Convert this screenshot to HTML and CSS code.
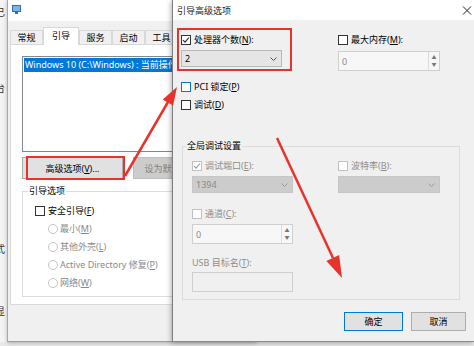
FILE: index.html
```html
<!DOCTYPE html>
<html lang="zh-CN">
<head>
  <meta charset="UTF-8" />
  <title>引导高级选项</title>
  <link rel="stylesheet" href="styles.css">
</head>
<body>
  <div class="desktop">

    <div class="bg-window">
      <span class="bg-text t1">已</span>
      <span class="bg-text t2">台</span>
      <span class="bg-text t3">式</span>
      <span class="bg-text t4">显</span>
    </div>

    <!-- 系统配置 -->
    <div class="win-main">
      <div class="titlebar main-title">
        <svg class="app-icon" width="9" height="9" viewBox="0 0 9 9">
          <rect x="0.5" y="0.5" width="8" height="6" fill="#7fb2e5" stroke="#2f6fb7" />
          <rect x="3" y="7" width="3" height="2" fill="#2f6fb7" />
        </svg>
      </div>

      <div class="tabs">
        <span class="tab">常规</span>
        <span class="tab active">引导</span>
        <span class="tab">服务</span>
        <span class="tab">启动</span>
        <span class="tab">工具</span>
      </div>

      <div class="panel">
        <div class="listbox">
          <div class="list-item">Windows 10 (C:\Windows) : 当前操作系统; 默认 OS</div>
        </div>

        <div class="btn-row">
          <button class="btn btn-adv">高级选项(<u>V</u>)...</button>
          <button class="btn" disabled>设为默认值(<u>D</u>)</button>
        </div>

        <div class="group boot-group">
          <span class="group-title">引导选项</span>
          <label class="check"><span class="box"></span>安全引导(<u>F</u>)</label>
          <div class="radios">
            <label class="radio"><span class="dot"></span>最小(<u>M</u>)</label>
            <label class="radio"><span class="dot"></span>其他外壳(<u>L</u>)</label>
            <label class="radio"><span class="dot"></span>Active Directory 修复(<u>P</u>)</label>
            <label class="radio"><span class="dot"></span>网络(<u>W</u>)</label>
          </div>
        </div>
      </div>
    </div>

    <!-- 引导高级选项 -->
    <div class="dialog">
      <div class="titlebar dlg-title">
        <span>引导高级选项</span>
        <svg class="close" width="14" height="9" viewBox="0 0 14 9">
          <path d="M3 0.5 L11 8.5 M11 0.5 L3 8.5" stroke="#222" stroke-width="1" fill="none" />
        </svg>
      </div>

      <div class="dlg-body">
        <div class="top-grid">
          <label class="check"><span class="box checked">
            <svg width="8" height="8" viewBox="0 0 8 8"><path d="M1 4 L3 6.2 L7 1.5" stroke="#222" stroke-width="1.1" fill="none" /></svg>
          </span>处理器个数(<u>N</u>):</label>
          <label class="check"><span class="box"></span>最大内存(<u>M</u>):</label>

          <div class="combo">
            <span>2</span>
            <svg width="7" height="4" viewBox="0 0 7 4"><path d="M0.5 0.5 L3.5 3.5 L6.5 0.5" stroke="#555" fill="none" /></svg>
          </div>
          <div class="spin spin-mem">
            <span>0</span>
            <span class="spin-btns"><i>▲</i><i>▼</i></span>
          </div>
        </div>

        <label class="check row-pci"><span class="box hover"></span>PCI 锁定(<u>P</u>)</label>
        <label class="check row-debug"><span class="box"></span>调试(<u>D</u>)</label>

        <div class="group debug-group">
          <span class="group-title">全局调试设置</span>
          <div class="debug-grid">
            <label class="check disabled"><span class="box checked">
              <svg width="8" height="8" viewBox="0 0 8 8"><path d="M1 4 L3 6.2 L7 1.5" stroke="#9a9a9a" stroke-width="1.1" fill="none" /></svg>
            </span>调试端口(<u>E</u>):</label>
            <label class="check disabled"><span class="box"></span>波特率(<u>B</u>):</label>

            <div class="combo combo-off">
              <span>1394</span>
              <svg width="7" height="4" viewBox="0 0 7 4"><path d="M0.5 0.5 L3.5 3.5 L6.5 0.5" stroke="#9a9a9a" fill="none" /></svg>
            </div>
            <div class="combo combo-off">
              <span></span>
              <svg width="7" height="4" viewBox="0 0 7 4"><path d="M0.5 0.5 L3.5 3.5 L6.5 0.5" stroke="#9a9a9a" fill="none" /></svg>
            </div>
          </div>

          <label class="check disabled row-channel"><span class="box"></span>通道(<u>C</u>):</label>
          <div class="spin spin-channel">
            <span>0</span>
            <span class="spin-btns"><i>▲</i><i>▼</i></span>
          </div>

          <div class="usb-label disabled">USB 目标名(<u>T</u>):</div>
          <div class="textbox"></div>
        </div>

        <div class="dlg-footer">
          <button class="btn btn-ok">确定</button>
          <button class="btn btn-cancel">取消</button>
        </div>
      </div>
    </div>

    <!-- 标注 -->
    <div class="mark mark-adv"></div>
    <div class="mark mark-cpu"></div>
    <svg class="arrows" width="474" height="346" viewBox="0 0 474 346">
      <line x1="125" y1="176" x2="168" y2="102" stroke="#e8322c" stroke-width="2.5" />
      <polygon points="177,87 173.1,105.6 162.7,99.6" fill="#e8322c" />
      <line x1="277" y1="138" x2="333" y2="258" stroke="#e8322c" stroke-width="2.5" />
      <polygon points="342,278 339.1,255.1 326.4,261" fill="#e8322c" />
    </svg>
  </div>
</body>
</html>
```

FILE: styles.css
```css
* {
  box-sizing: border-box;
}

body {
  margin: 0;
  font-family: "Noto Sans", "Noto Sans CJK SC", sans-serif;
  font-size: 9px;
  color: #000;
}

u {
  text-decoration-thickness: 1px;
  text-underline-offset: 1px;
}

.desktop {
  position: relative;
  width: 474px;
  height: 346px;
  overflow: hidden;
  background: #e9e9e9;
}

/* window behind, only a sliver shows */
.bg-window {
  position: absolute;
  left: 0;
  top: 0;
  width: 8px;
  height: 342px;
  background: #f4f4f4;
  border-right: 1px solid #c9c9c9;
  overflow: hidden;
}

.bg-text {
  position: absolute;
  left: -5px;
  font-size: 10px;
  line-height: 12px;
  color: #333;
}

.t1 { top: 6px; }
.t2 { top: 82px; }
.t3 { top: 243px; }
.t4 { top: 305px; }

/* main window */
.win-main {
  position: absolute;
  left: 7px;
  top: 0;
  width: 250px;
  height: 342px;
  background: #f0f0f0;
  border-left: 1px solid #a8a8a8;
  border-bottom: 1px solid #9c9c9c;
  box-shadow: 0 1px 4px rgba(0, 0, 0, 0.25);
}

.titlebar {
  height: 21px;
  background: #fff;
}

.main-title {
  padding: 5px 0 0 4px;
}

.app-icon {
  display: block;
}

.tabs {
  display: flex;
  align-items: flex-end;
  height: 23px;
  padding-left: 2px;
}

.tab {
  width: 33px;
  height: 14px;
  line-height: 13px;
  text-align: center;
  border: 1px solid #d9d9d9;
  border-bottom: 0;
  background: #f0f0f0;
}

.tab.active {
  width: 36px;
  height: 18px;
  line-height: 15px;
  margin-bottom: -1px;
  background: #fff;
  position: relative;
  z-index: 1;
}

.panel {
  height: 261px;
  margin-left: 2px;
  padding: 11px 0 0 11px;
  background: #fff;
  border: 1px solid #d9d9d9;
}

.listbox {
  width: 220px;
  height: 96px;
  padding: 1px;
  border: 1px solid #828790;
}

.list-item {
  height: 14px;
  line-height: 14px;
  padding-left: 1px;
  background: #0078d7;
  color: #fff;
  white-space: nowrap;
  overflow: hidden;
}

.btn-row {
  display: flex;
  gap: 10px;
  margin-top: 5px;
}

.btn {
  height: 22px;
  padding: 0;
  font-family: inherit;
  font-size: 9px;
  color: #000;
  background: #e1e1e1;
  border: 1px solid #adadad;
}

.btn-adv {
  width: 101px;
}

.btn:disabled {
  width: 80px;
  background: #cccccc;
  border-color: #bfbfbf;
  color: #838383;
}

/* group boxes */
.group {
  border: 1px solid #dcdcdc;
}

.group-title {
  display: block;
  width: max-content;
  line-height: 12px;
  margin: -7px 0 0 4px;
  padding: 0 1px;
}

.boot-group {
  width: 210px;
  height: 106px;
  margin-top: 12px;
  padding-left: 12px;
}

.boot-group .group-title {
  margin-left: -7px;
  background: #fff;
}

.check,
.radio {
  display: flex;
  align-items: center;
  height: 12px;
  line-height: 12px;
  white-space: nowrap;
}

.boot-group .check {
  margin-top: 8px;
}

.box {
  display: flex;
  align-items: center;
  justify-content: center;
  width: 10px;
  height: 10px;
  margin-right: 3px;
  background: #fff;
  border: 1px solid #333;
}

.box.hover {
  border-color: #0078d7;
}

.disabled {
  color: #8d8d8d;
}

.disabled .box {
  border-color: #c2c2c2;
}

.radios {
  display: flex;
  flex-direction: column;
  gap: 6px;
  margin-top: 6px;
  padding-left: 13px;
  color: #8a8a8a;
}

.dot {
  width: 10px;
  height: 10px;
  margin-right: 2px;
  border: 1px solid #c4c4c4;
  border-radius: 50%;
  background: #fff;
}

/* advanced options dialog */
.dialog {
  position: absolute;
  left: 172px;
  top: 0;
  width: 302px;
  height: 342px;
  background: #f0f0f0;
  border-left: 1px solid #7d7d7d;
  border-bottom: 1px solid #8a8a8a;
  box-shadow: -1px 1px 5px rgba(0, 0, 0, 0.3);
}

.dlg-title {
  display: flex;
  align-items: center;
  justify-content: space-between;
  height: 20px;
  padding-left: 4px;
  color: #222;
}

.dlg-body {
  padding-left: 8px;
}

.top-grid {
  display: grid;
  grid-template-columns: 101px 102px;
  column-gap: 56px;
  row-gap: 4px;
  margin-top: 14px;
  align-items: start;
}

.combo {
  display: flex;
  align-items: center;
  justify-content: space-between;
  height: 17px;
  padding: 0 4px 0 3px;
  background: #e5e5e5;
  border: 1px solid #b9b9b9;
}

.combo-off {
  background: #cccccc;
  border-color: #c6c6c6;
  color: #8a8a8a;
}

.spin {
  display: flex;
  align-items: center;
  justify-content: space-between;
  height: 20px;
  padding-left: 3px;
  background: #f7f7f7;
  border: 1px solid #cfcfcf;
  color: #8a8a8a;
}

.spin-mem {
  margin-top: 1px;
}

.spin-btns {
  display: flex;
  flex-direction: column;
  justify-content: center;
  width: 11px;
  height: 18px;
  border-left: 1px solid #dcdcdc;
  font-size: 5px;
  line-height: 7px;
  text-align: center;
  color: #777;
}

.spin-btns i {
  font-style: normal;
}

.row-pci {
  margin-top: 10px;
}

.row-debug {
  margin-top: 6px;
}

.debug-group {
  width: 278px;
  margin: 35px 0 0 1px;
  padding: 0 0 7px 9px;
}

.debug-group .group-title {
  margin-left: -6px;
  background: #f0f0f0;
}

.debug-grid {
  display: grid;
  grid-template-columns: 101px 102px;
  column-gap: 45px;
  row-gap: 4px;
  margin-top: 8px;
}

.row-channel {
  margin-top: 15px;
}

.spin-channel {
  width: 101px;
  margin-top: 4px;
}

.usb-label {
  margin-top: 13px;
  line-height: 12px;
}

.textbox {
  width: 101px;
  height: 20px;
  margin-top: 3px;
  background: #f0f0f0;
  border: 1px solid #cfcfcf;
}

.dlg-footer {
  display: flex;
  justify-content: flex-end;
  gap: 8px;
  margin-top: 12px;
  padding-right: 8px;
}

.btn-ok,
.btn-cancel {
  height: 19px;
}

.btn-ok {
  width: 59px;
  border-color: #0078d7;
}

.btn-cancel {
  width: 55px;
}

/* red annotations drawn over the screenshot */
.mark {
  position: absolute;
  border: 2px solid #e8322c;
}

.mark-adv {
  left: 26px;
  top: 156px;
  width: 99px;
  height: 24px;
}

.mark-cpu {
  left: 177px;
  top: 28px;
  width: 115px;
  height: 43px;
}

.arrows {
  position: absolute;
  left: 0;
  top: 0;
  pointer-events: none;
}
```
